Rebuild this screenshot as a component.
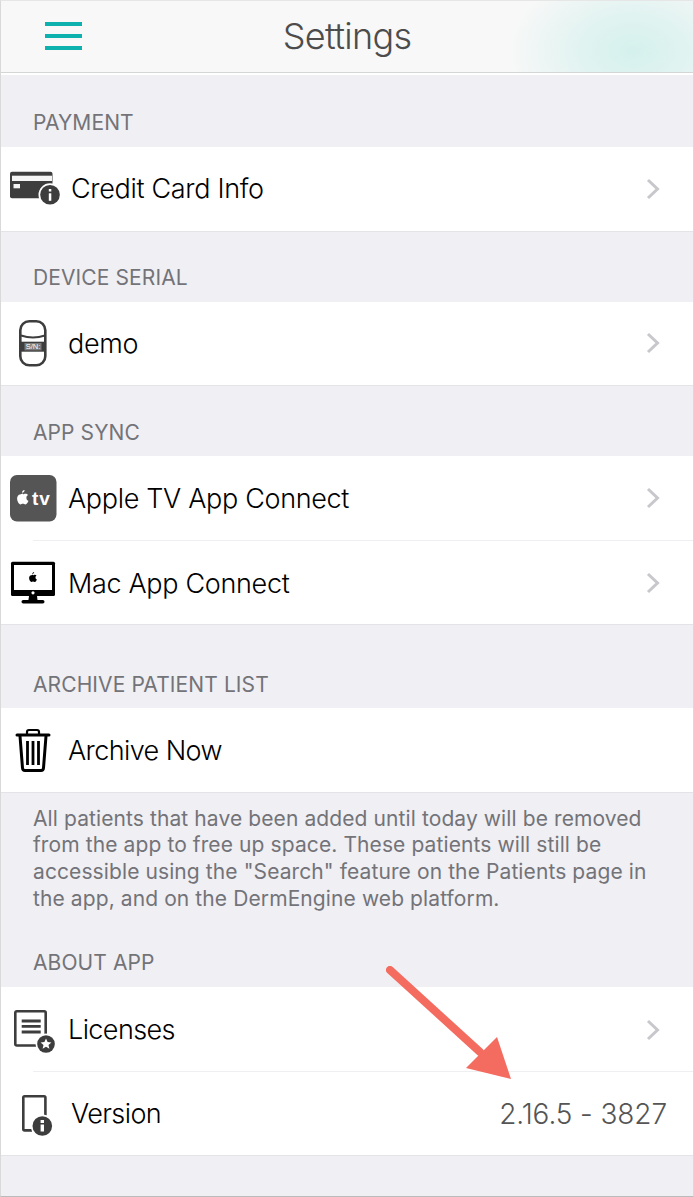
<div class="screen">
  <header class="navbar">
    <button class="menu" aria-label="Menu">
      <span></span><span></span><span></span>
    </button>
    <h1>Settings</h1>
  </header>

  <div class="section-label first">PAYMENT</div>
  <div class="group">
    <div class="row">
      <span class="icon">
        <svg width="52" height="36" viewBox="0 0 52 36">
          <rect x="0" y="0.700" width="42.500" height="26.500" rx="2" fill="#3d3d3d" />
          <rect x="2" y="4.700" width="40" height="5.300" fill="#f4f4f4" />
          <rect x="3.500" y="13" width="6.500" height="4.300" fill="#f4f4f4" />
          <circle cx="40" cy="23.800" r="11.500" fill="#fff" />
          <circle cx="40" cy="23.800" r="9.800" fill="#3d3d3d" />
          <rect x="38.800" y="22.300" width="2.500" height="7.500" fill="#fff" />
          <rect x="38.800" y="18" width="2.500" height="2.500" fill="#fff" />
        </svg>
      </span>
      <span class="label shifted">Credit Card Info</span>
      <svg class="chevron" width="14" height="22" viewBox="0 0 14 22"><path d="M2 2l9.500 9L2 20" /></svg>
    </div>
  </div>

  <div class="section-label">DEVICE SERIAL</div>
  <div class="group">
    <div class="row">
      <span class="icon">
        <svg width="50" height="48" viewBox="0 0 50 48">
          <rect x="10.300" y="2.300" width="25" height="44" rx="9" fill="#fff" stroke="#3d3d3d" stroke-width="2.600" />
          <path d="M11 16.500q12 3.800 24 0" fill="none" stroke="#3d3d3d" stroke-width="2" />
          <rect x="11" y="22.700" width="24" height="10" fill="#3d3d3d" />
          <rect x="14.500" y="24" width="17" height="7.400" fill="#7a7a7a" />
          <text x="23" y="30" class="sn" text-anchor="middle">S/N:</text>
        </svg>
      </span>
      <span class="label">demo</span>
      <svg class="chevron" width="14" height="22" viewBox="0 0 14 22"><path d="M2 2l9.500 9L2 20" /></svg>
    </div>
  </div>

  <div class="section-label">APP SYNC</div>
  <div class="group">
    <div class="row inset">
      <span class="icon">
        <svg width="50" height="48" viewBox="0 0 50 48">
          <rect x="0" y="1" width="46.500" height="46.500" rx="7" fill="#555" />
          <path d="M13 19.600c-1.300 0-1.900.9-3 .9-1.500 0-2.900 1.800-2.900 4.100 0 2.700 1.800 5.800 3.300 5.800.9 0 1.400-.6 2.500-.6s1.500.6 2.500.6c1.400 0 2.700-2.200 3-3.600-1.100-.5-2-1.500-2-2.900 0-1.400.7-2.300 1.700-2.800-.7-.9-1.800-1.400-2.700-1.400-1 0-1.700.6-2.400.6z" fill="#fff" />
          <path d="M14.600 16c.1 1.500-1.200 2.900-2.600 2.800-.1-1.400 1.300-2.800 2.600-2.800z" fill="#fff" />
          <text x="22" y="30.500" class="tv">tv</text>
        </svg>
      </span>
      <span class="label">Apple TV App Connect</span>
      <svg class="chevron" width="14" height="22" viewBox="0 0 14 22"><path d="M2 2l9.500 9L2 20" /></svg>
    </div>
    <div class="row low">
      <span class="icon">
        <svg width="50" height="48" viewBox="0 0 50 48">
          <rect x="1" y="2.700" width="44" height="34.300" rx="1.500" fill="#000" />
          <rect x="4" y="6" width="38" height="25" fill="#fff" />
          <circle cx="23" cy="33.800" r="1.600" fill="#fff" />
          <path d="M19 37h8l.6 4.500H18.400z" fill="#000" />
          <rect x="11.500" y="41" width="23" height="3.500" rx="1.700" fill="#000" />
          <path d="M23 15.800c-.9 0-1.200.5-1.900.5-1 0-2 1.200-2 2.700 0 1.900 1.300 3.900 2.300 3.900.6 0 .9-.4 1.600-.4s1 .4 1.700.4c1 0 1.900-1.500 2.100-2.500-.8-.3-1.300-1-1.300-1.900s.5-1.500 1.100-1.900c-.5-.6-1.200-.9-1.800-.9-.8 0-1.200.5-1.800.5z" fill="#000" />
          <path d="M24.100 13c.1 1-.8 2.100-1.800 2-.1-1 .9-2 1.800-2z" fill="#000" />
        </svg>
      </span>
      <span class="label">Mac App Connect</span>
      <svg class="chevron" width="14" height="22" viewBox="0 0 14 22"><path d="M2 2l9.500 9L2 20" /></svg>
    </div>
  </div>

  <div class="section-label tall">ARCHIVE PATIENT LIST</div>
  <div class="group">
    <div class="row low">
      <span class="icon">
        <svg width="50" height="48" viewBox="0 0 50 48">
          <path d="M7 8h32" stroke="#000" stroke-width="3" stroke-linecap="round" fill="none" />
          <path d="M17 7V5q0-2 2-2h8q2 0 2 2v2" stroke="#000" stroke-width="2.200" fill="none" />
          <path d="M10 9l2.500 32q.2 2.500 2.500 2.500h16q2.300 0 2.500-2.500L36 9" stroke="#000" stroke-width="3" fill="none" />
          <path d="M17.500 14v24M23 14v24M28.500 14v24" stroke="#000" stroke-width="2.800" fill="none" />
        </svg>
      </span>
      <span class="label tight">Archive Now</span>
    </div>
  </div>
  <p class="footnote">All patients that have been added until today will be removed from the app to free up space. These patients will still be accessible using the "Search" feature on the Patients page in the app, and on the DermEngine web platform.</p>

  <div class="section-label about">ABOUT APP</div>
  <div class="group">
    <div class="row inset">
      <span class="icon">
        <svg width="50" height="48" viewBox="0 0 50 48">
          <path d="M27 39.500H6.800q-1.500 0-1.500-1.500V6.800q0-1.500 1.500-1.500h27.400q1.500 0 1.500 1.500V29" fill="none" stroke="#3d3d3d" stroke-width="2.600" />
          <path d="M11.700 15h19M11.700 20.300h19M11.700 26h19" stroke="#3d3d3d" stroke-width="2.800" />
          <circle cx="36" cy="38" r="10.500" fill="#fff" />
          <circle cx="36" cy="38" r="8.800" fill="#3d3d3d" />
          <path d="M36 32.500l1.600 3.600 3.800.4-2.900 2.500.9 3.800-3.400-2-3.400 2 .9-3.800-2.900-2.500 3.800-.4z" fill="#fff" />
        </svg>
      </span>
      <span class="label tight">Licenses</span>
      <svg class="chevron" width="14" height="22" viewBox="0 0 14 22"><path d="M2 2l9.500 9L2 20" /></svg>
    </div>
    <div class="row">
      <span class="icon">
        <svg width="50" height="48" viewBox="0 0 50 48">
          <path d="M22 40.400h-7.400q-1.300 0-1.300-1.300V7.600q0-1.300 1.300-1.300h19.500q1.300 0 1.300 1.300V26" fill="none" stroke="#3d3d3d" stroke-width="2.600" />
          <circle cx="32.300" cy="36" r="11.500" fill="#fff" />
          <circle cx="32.300" cy="36" r="9.800" fill="#3d3d3d" />
          <rect x="30.600" y="34.500" width="3.400" height="7" fill="#fff" />
          <rect x="30.600" y="30" width="3.400" height="3" fill="#fff" />
        </svg>
      </span>
      <span class="label shifted tight">Version</span>
      <span class="value">2.16.5 - 3827</span>
    </div>
  </div>

  <svg class="arrow" width="135" height="125" viewBox="0 0 135 125">
    <path d="M4 4L94 86" stroke="#f46b60" stroke-width="8" stroke-linecap="round" fill="none" />
    <path d="M111 71L125 113 80 102z" fill="#f46b60" />
  </svg>
</div>

<style>
  :global(body) {
    margin: 0;
    background: #efeff4;
  }

  .screen {
    position: relative;
    box-sizing: border-box;
    width: 694px;
    height: 1197px;
    overflow: hidden;
    background: #efeff4;
    border-left: 1px solid #d9d9d9;
    border-right: 1px solid #d9d9d9;
    border-top: 1px solid #e6e6e6;
    border-bottom: 1px solid #bbb;
    font-family: Inter, "Liberation Sans", sans-serif;
    font-weight: 300;
  }

  .navbar {
    position: relative;
    box-sizing: border-box;
    height: 72px;
    display: flex;
    align-items: center;
    justify-content: center;
    border-bottom: 1px solid #d4d6d6;
    box-shadow: 0 2px 0 #fff;
    background:
      radial-gradient(ellipse 125px 85px at 632px 50px, #d5f1ed 0%, rgba(220, 242, 239, 0.8) 45%, rgba(248, 248, 248, 0) 100%),
      #f8f8f8;
  }

  .menu {
    position: absolute;
    left: 44px;
    top: 21px;
    display: flex;
    flex-direction: column;
    gap: 8px;
    padding: 0;
    border: none;
    background: none;
  }

  .menu span {
    display: block;
    width: 37px;
    height: 4px;
    background: #0db1ad;
  }

  h1 {
    margin: 0 0 1px;
    font-size: 36px;
    font-weight: 300;
    color: #4c4c4c;
    letter-spacing: -0.7px;
  }

  .section-label {
    box-sizing: border-box;
    height: 70px;
    padding: 34.500px 0 0 32px;
    font-size: 21px;
    line-height: 24px;
    color: #737378;
    font-weight: 400;
    letter-spacing: 0.1px;
  }

  .section-label.first {
    height: 74px;
    padding-top: 37.500px;
  }

  .section-label.tall {
    height: 83px;
    padding-top: 47.500px;
  }

  .section-label.about {
    height: 75px;
    padding-top: 39px;
  }

  .group {
    background: #fff;
    border-bottom: 1px solid #e4e4e8;
  }

  .row {
    position: relative;
    height: 83.500px;
    box-sizing: border-box;
    display: flex;
    align-items: center;
    padding-right: 33px;
  }

  .row.inset {
    height: 84.500px;
  }

  .row.low {
    padding-top: 1.500px;
  }

  .row.inset::after {
    content: "";
    position: absolute;
    left: 32px;
    right: 0;
    bottom: 0;
    height: 1px;
    background: #efeff1;
  }

  .icon {
    flex: none;
    width: 67px;
    padding-left: 9px;
    box-sizing: border-box;
    display: flex;
    align-items: center;
  }

  .icon svg {
    flex: none;
  }

  .label {
    flex: 1;
    font-size: 27px;
    color: #000;
    letter-spacing: -0.33px;
  }

  .label.tight {
    letter-spacing: -0.6px;
  }

  .shifted {
    margin-left: 3px;
  }

  .chevron {
    flex: none;
    fill: none;
    stroke: #c7c7cc;
    stroke-width: 3;
  }

  .value {
    font-size: 28px;
    color: #555;
    letter-spacing: -0.1px;
    margin-right: -7px;
  }

  .footnote {
    margin: 0;
    padding: 13px 30px 0 32px;
    font-size: 21px;
    line-height: 26.700px;
    color: #737378;
    font-weight: 400;
    letter-spacing: 0.1px;
  }

  .sn {
    font-family: "Liberation Sans", sans-serif;
    font-size: 7.500px;
    fill: #fff;
  }

  .tv {
    font-family: "Liberation Sans", sans-serif;
    font-weight: 700;
    font-size: 19px;
    letter-spacing: 1px;
    fill: #fff;
  }

  .arrow {
    position: absolute;
    left: 385px;
    top: 965px;
  }
</style>
